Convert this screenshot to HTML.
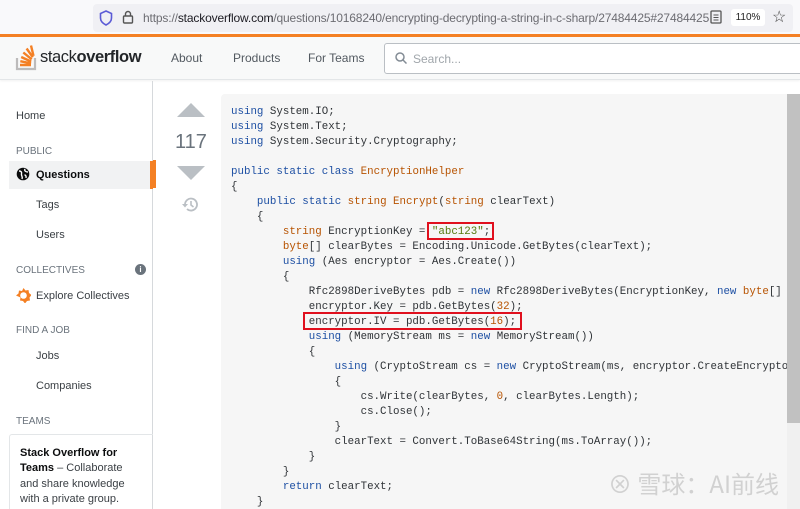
<!DOCTYPE html><html><head><style>
*{margin:0;padding:0;box-sizing:border-box}
html,body{width:800px;height:509px;overflow:hidden}
body{background:#fff;font-family:"Liberation Sans",sans-serif;position:relative}
.abs{position:absolute}
.side{font-size:11px;color:#3b4045}
pre{font-family:"Liberation Mono",monospace;font-size:10.8px;line-height:15px;color:#2f3337}
.k{color:#1d4fa3}.t{color:#b75301}.s{color:#54790d}.n{color:#b75301}
</style></head><body>
<div class="abs" style="left:0;top:0;width:800px;height:35px;background:#f9f9fb"></div>
<div class="abs" style="top:4px;left:93px;width:700px;height:28px;background:#f0f0f4;border-radius:4px"></div>
<svg class="abs" style="left:99px;top:10px" width="14" height="16"><path d="M7 1L12.5 3.5V8C12.5 11 10 13.5 7 15 4 13.5 1.5 11 1.5 8V3.5Z" fill="none" stroke="#5b5bd6" stroke-width="1.6"/></svg>
<svg class="abs" style="left:122px;top:10px" width="12" height="14"><rect x="1.5" y="6" width="9" height="7" rx="1" fill="none" stroke="#555" stroke-width="1.4"/><path d="M3.5 6V4a2.5 2.5 0 0 1 5 0v2" fill="none" stroke="#555" stroke-width="1.4"/></svg>
<div class="abs" style="left:143px;top:11px;font-size:12px;letter-spacing:-0.15px;color:#6c6c72;white-space:nowrap">https://<span style="color:#1c1b22">stackoverflow.com</span>/questions/10168240/encrypting-decrypting-a-string-in-c-sharp/27484425#27484425</div>
<svg class="abs" style="left:710px;top:10px" width="12" height="14"><rect x="1" y="1" width="10" height="12" rx="1" fill="none" stroke="#555" stroke-width="1.3"/><path d="M3.5 5h5M3.5 7.5h5M3.5 10h5" stroke="#555"/></svg>
<div class="abs" style="left:731px;top:9px;width:34px;height:17px;background:#fff;border-radius:3px;font-size:10px;text-align:center;line-height:17px;color:#222">110%</div>
<div class="abs" style="left:772px;top:7px;font-size:16px;color:#444">☆</div>
<div class="abs" style="left:0;top:34px;width:800px;height:3px;background:#f48024"></div>
<div class="abs" style="left:0;top:37px;width:800px;height:43px;background:#f8f9f9;border-bottom:1px solid #e3e6e8;box-shadow:0 1px 2px rgba(0,0,0,.06)"></div>
<svg class="abs" style="left:15px;top:43px" width="24" height="28"><path d="M2 15v11h18V15" fill="none" stroke="#bcbbbb" stroke-width="2.2"/><g stroke="#f48024" stroke-width="2.4"><path d="M5 22h11M5.3 18.2l10.8 2.2M6.2 14l10 4.6M8.3 9.5l8.4 6.8M11.6 5.5l6.2 8.7M16 2.5l2.5 10.4"/></g></svg>
<div class="abs" style="left:40px;top:48px;font-size:16.5px;color:#232629;letter-spacing:-0.4px">stack<b>overflow</b></div>
<div class="abs" style="left:171px;top:51px;font-size:12px;color:#525960">About</div>
<div class="abs" style="left:233px;top:51px;font-size:12px;color:#525960">Products</div>
<div class="abs" style="left:308px;top:51px;font-size:12px;color:#525960">For Teams</div>
<div class="abs" style="left:384px;top:43px;width:420px;height:31px;background:#fff;border:1px solid #babfc4;border-radius:3px"></div>
<svg class="abs" style="left:395px;top:52px" width="12" height="12"><circle cx="5" cy="5" r="4" fill="none" stroke="#838c95" stroke-width="1.5"/><path d="M8 8l3.5 3.5" stroke="#838c95" stroke-width="1.5"/></svg>
<div class="abs" style="left:413px;top:52px;font-size:12px;color:#a0a6ab">Search...</div>

<div class="abs" style="left:152px;top:81px;width:1px;height:428px;background:#d6d9dc"></div>
<div class="abs side" style="left:16px;top:110px">Home</div>
<div class="abs side" style="left:16px;top:146px;font-size:10px;color:#6a737c">PUBLIC</div>
<div class="abs" style="left:9px;top:161px;width:144px;height:28px;background:#f1f2f3;border-right:3px solid #f48024"></div>
<svg class="abs" style="left:16px;top:167px" width="14" height="14"><circle cx="7" cy="7" r="6.3" fill="#0c0d0e"/><path d="M3 4c2 0 3 1 2.5 3S7 9 6 12M9 2c-1 2 1 3 3 3M8.5 8c1 0 2 1 1.5 3" stroke="#fff" stroke-width="1.4" fill="none"/></svg>
<div class="abs side" style="left:36px;top:169px;font-weight:bold;color:#0c0d0e">Questions</div>
<div class="abs side" style="left:36px;top:199px">Tags</div>
<div class="abs side" style="left:36px;top:229px">Users</div>
<div class="abs side" style="left:16px;top:265px;font-size:10px;color:#6a737c">COLLECTIVES</div>
<div class="abs" style="left:135px;top:264px;width:11px;height:11px;border-radius:50%;background:#6a737c;color:#fff;font-size:8px;font-weight:bold;text-align:center;line-height:11px">i</div>
<svg class="abs" style="left:16px;top:288px" width="15" height="15"><path d="M7.5 0l2 2.5 3-.5.5 3 2.5 2-2 2.5.5 3-3 .5-2 2.5-2-2.5-3-.5.5-3L0 7.5l2.5-2 .5-3 3 .5z" fill="#f48024"/><circle cx="7.5" cy="7.5" r="3.3" fill="#fff"/></svg>
<div class="abs side" style="left:36px;top:290px">Explore Collectives</div>
<div class="abs side" style="left:16px;top:325px;font-size:10px;color:#6a737c">FIND A JOB</div>
<div class="abs side" style="left:36px;top:350px">Jobs</div>
<div class="abs side" style="left:36px;top:380px">Companies</div>
<div class="abs side" style="left:16px;top:416px;font-size:10px;color:#6a737c">TEAMS</div>
<div class="abs" style="left:9px;top:434px;width:144px;height:80px;border:1px solid #e3e6e8;border-right:none;border-radius:3px 0 0 0"></div>
<div class="abs" style="left:20px;top:446px;width:110px;font-size:11px;line-height:15.3px;color:#3b4045"><b style="color:#0c0d0e">Stack Overflow for Teams</b> – Collaborate and share knowledge with a private group.</div>

<svg class="abs" style="left:177px;top:102px" width="28" height="16"><path d="M0 15L14 1l14 14z" fill="#babfc4"/></svg>
<div class="abs" style="left:175px;top:131px;font-size:20px;color:#6a737c">117</div>
<svg class="abs" style="left:177px;top:165px" width="28" height="16"><path d="M0 1l14 14L28 1z" fill="#babfc4"/></svg>
<svg class="abs" style="left:181px;top:196px" width="18" height="17"><path d="M4 8.5a6 6 0 1 1 2 4.5" fill="none" stroke="#babfc4" stroke-width="1.8"/><path d="M1 8l3 3.5L7 8z" fill="#babfc4"/><path d="M10 5v4l2.5 2" fill="none" stroke="#babfc4" stroke-width="1.6"/></svg>
<div class="abs" style="left:153px;top:160px;width:3px;height:28px;background:#f48024"></div>

<div class="abs" style="left:221px;top:94px;width:579px;height:420px;background:#f6f6f6;border-radius:4px 0 0 0;overflow:hidden">
<pre style="padding:11px 0 0 10px">
<span class="k">using</span> System.IO;
<span class="k">using</span> System.Text;
<span class="k">using</span> System.Security.Cryptography;

<span class="k">public</span> <span class="k">static</span> <span class="k">class</span> <span class="t">EncryptionHelper</span>
{
    <span class="k">public</span> <span class="k">static</span> <span class="t">string</span> <span class="t">Encrypt</span>(<span class="t">string</span> clearText)
    {
        <span class="t">string</span> EncryptionKey = <span class="s">"abc123"</span>;
        <span class="t">byte</span>[] clearBytes = Encoding.Unicode.GetBytes(clearText);
        <span class="k">using</span> (Aes encryptor = Aes.Create())
        {
            Rfc2898DeriveBytes pdb = <span class="k">new</span> Rfc2898DeriveBytes(EncryptionKey, <span class="k">new</span> <span class="t">byte</span>[]
            encryptor.Key = pdb.GetBytes(<span class="n">32</span>);
            encryptor.IV = pdb.GetBytes(<span class="n">16</span>);
            <span class="k">using</span> (MemoryStream ms = <span class="k">new</span> MemoryStream())
            {
                <span class="k">using</span> (CryptoStream cs = <span class="k">new</span> CryptoStream(ms, encryptor.CreateEncryptor
                {
                    cs.Write(clearBytes, <span class="n">0</span>, clearBytes.Length);
                    cs.Close();
                }
                clearText = Convert.ToBase64String(ms.ToArray());
            }
        }
        <span class="k">return</span> clearText;
    }
</pre>
<div class="abs" style="left:566px;top:0;width:13px;height:420px;background:#f0f0f0"></div>
<div class="abs" style="left:566px;top:0;width:13px;height:329px;background:#c1c1c1"></div>
</div>
<div class="abs" style="left:427px;top:222px;width:67px;height:18px;border:2.5px solid #e0101e"></div>
<div class="abs" style="left:303px;top:312px;width:219px;height:18px;border:2.5px solid #e0101e"></div>
<div class="abs" style="left:608px;top:468px;font-size:24px;line-height:30px;white-space:nowrap;color:rgba(200,200,200,.8);font-family:'Noto Sans CJK SC',sans-serif">⊗ 雪球：AI前线</div>
</body></html>
